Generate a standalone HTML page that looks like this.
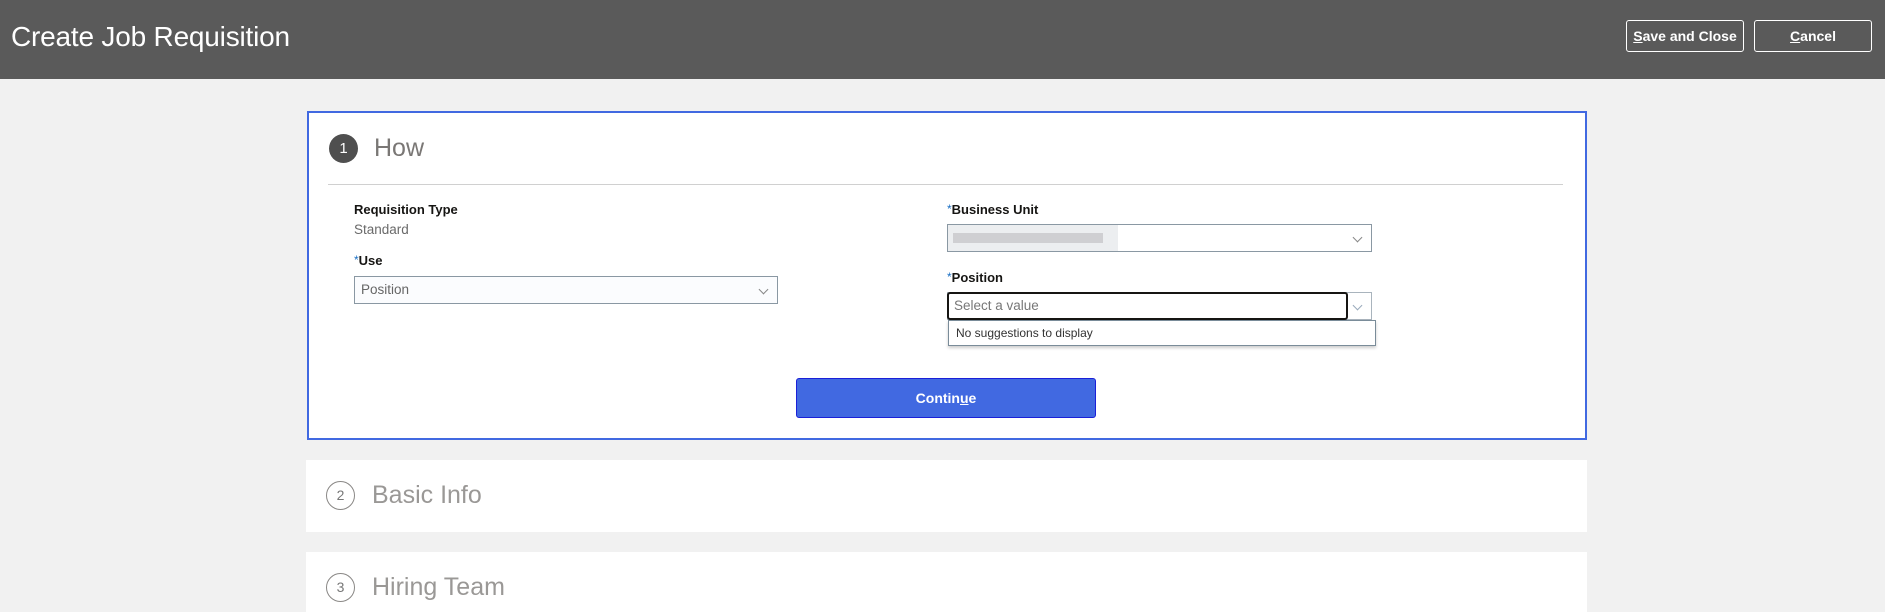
<!DOCTYPE html>
<html><head><meta charset="utf-8"><style>
*{box-sizing:border-box;margin:0;padding:0}
body{width:1885px;height:604px;background:#f1f1f1;font-family:"Liberation Sans",sans-serif;position:relative;overflow:hidden}
.a{position:absolute}
.hdr{left:0;top:0;width:1885px;height:79px;background:#5a5a5a}
.title{left:11px;top:21px;color:#fff;font-size:28px;font-weight:300;letter-spacing:-0.2px}
.hb{top:20px;height:32px;border:1px solid #fff;border-radius:3px;color:#fff;font-size:14px;font-weight:bold;text-align:center;line-height:30px}
.panel{background:#fff}
.lbl{font-size:13px;color:#161513;font-weight:bold}
.star{color:#1a6fc4;font-size:12px;vertical-align:top;font-weight:normal}
.sel{border:1px solid #8a98a3;height:28px;background:#fbfcfe;font-size:13.5px;color:#666;padding-left:6px;line-height:26px}
.chev{position:absolute;right:10px;top:9px;width:7px;height:7px;border-right:1px solid #888;border-bottom:1px solid #888;transform:rotate(45deg)}
.circ{border-radius:50%;text-align:center}
.st{font-size:25px;color:#9a9896;font-weight:300}
</style></head><body>
<div class="a hdr"></div>
<div class="a title">Create Job Requisition</div>
<div class="a hb" style="left:1626px;width:118px"><u>S</u>ave and Close</div>
<div class="a hb" style="left:1754px;width:118px"><u>C</u>ancel</div>

<div class="a panel" style="left:307px;top:111px;width:1280px;height:329px;border:2px solid #4169e1"></div>
<div class="a circ" style="left:329px;top:134px;width:29px;height:29px;background:#4f4f4f;color:#fff;font-size:15px;line-height:29px">1</div>
<div class="a st" style="left:374px;top:134px;color:#7a7775">How</div>
<div class="a" style="left:328px;top:184px;width:1235px;height:1px;background:#d0d0d0"></div>

<div class="a lbl" style="left:354px;top:202px">Requisition Type</div>
<div class="a" style="left:354px;top:222px;font-size:13.5px;color:#6a6a6a">Standard</div>
<div class="a lbl" style="left:354px;top:253px"><span class="star">*</span>Use</div>
<div class="a sel" style="left:354px;top:276px;width:424px">Position<span class="chev"></span></div>

<div class="a lbl" style="left:947px;top:202px"><span class="star">*</span>Business Unit</div>
<div class="a sel" style="left:947px;top:224px;width:425px;background:#fff"><span class="chev"></span></div>
<div class="a" style="left:948px;top:225px;width:170px;height:26px;background:#eceef0"></div>
<div class="a" style="left:953px;top:233px;width:150px;height:10px;background:#cfcfd2"></div>
<div class="a lbl" style="left:947px;top:270px"><span class="star">*</span>Position</div>
<div class="a sel" style="left:947px;top:292px;width:425px;background:#fff;border-color:#a9b4bd"><span class="chev" style="border-color:#9ab"></span></div>
<div class="a" style="left:947px;top:292px;width:401px;height:28px;border:2px solid #161513;border-radius:3px;background:#fff;font-size:13.5px;color:#777;padding-left:5px;line-height:24px">Select a value</div>
<div class="a" style="left:948px;top:320px;width:428px;height:26px;border:1px solid #7a8c99;background:#fff;font-size:12px;color:#333;padding-left:7px;line-height:24px;box-shadow:0 2px 3px rgba(0,0,0,.2)">No suggestions to display</div>

<div class="a" style="left:796px;top:378px;width:300px;height:40px;background:#4169e1;border:1px solid #1a20d8;border-radius:3px;color:#fff;font-weight:bold;font-size:14px;text-align:center;line-height:38px">Contin<u>u</u>e</div>

<div class="a panel" style="left:306px;top:460px;width:1281px;height:72px"></div>
<div class="a circ" style="left:326px;top:481px;width:29px;height:29px;border:1px solid #8a8886;color:#777;font-size:14px;line-height:27px">2</div>
<div class="a st" style="left:372px;top:481px">Basic Info</div>
<div class="a panel" style="left:306px;top:552px;width:1281px;height:60px"></div>
<div class="a circ" style="left:326px;top:573px;width:29px;height:29px;border:1px solid #8a8886;color:#777;font-size:14px;line-height:27px">3</div>
<div class="a st" style="left:372px;top:573px">Hiring Team</div>
</body></html>
